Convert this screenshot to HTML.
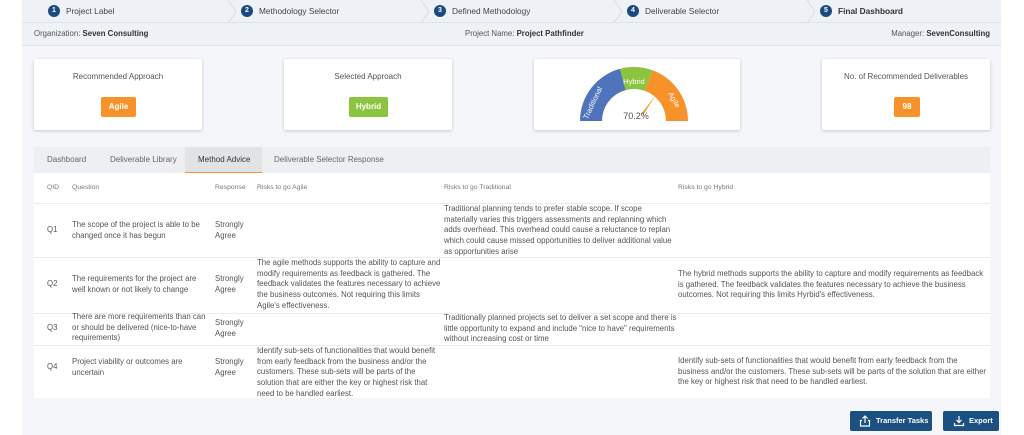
<!DOCTYPE html>
<html><head><style>
*{margin:0;padding:0;box-sizing:border-box}
body{width:1024px;height:435px;background:#fff;font-family:"Liberation Sans",sans-serif;color:#555;position:relative;overflow:hidden;font-size:8px}
.a{position:absolute}
.main{left:22px;top:0;width:979px;height:435px;background:#f4f6f9}
.step{top:0;height:23px;line-height:23px;font-size:8.3px;color:#444}
.num{display:inline-block;width:12px;height:12px;border-radius:50%;background:#1c4a7e;color:#fff;font-size:7px;font-weight:bold;text-align:center;line-height:12px;margin-right:6px;vertical-align:middle;position:relative;top:-1px}
.card{background:#fff;border-radius:2px;box-shadow:0 1px 3px rgba(0,0,0,.2);top:59px;height:71px}
.ct{position:absolute;top:13px;width:100%;text-align:center;font-size:8px;color:#555}
.badge{position:absolute;top:38px;height:20px;line-height:20px;color:#fff;font-weight:bold;font-size:8px;text-align:center;border-radius:2px}
.tab{top:147px;height:26px;line-height:26px;font-size:8px;color:#666}
.cell{line-height:10.7px;font-size:7.8px;color:#555;white-space:nowrap}
.hd{font-size:6.8px;color:#777;top:184px}
.hr{left:34px;width:956px;height:1px;background:#ececec}
.btn{top:411px;height:20px;background:#1c4f82;border-radius:2px;color:#fff;font-weight:bold;font-size:7.5px;line-height:20px}
</style></head><body>
<div class="a main"></div>
<div class="a" style="left:22px;top:0;width:979px;height:23px;background:#eef1f5;border-bottom:1px solid #dde2e8"></div>
<div class="a" style="left:22px;top:23px;width:979px;height:23px;background:#eef1f5;border-bottom:1px solid #dde2e8"></div>
<div class="a step" style="left:48px"><span class="num">1</span>Project Label</div>
<div class="a step" style="left:241px"><span class="num">2</span>Methodology Selector</div>
<div class="a step" style="left:434px"><span class="num">3</span>Defined Methodology</div>
<div class="a step" style="left:627px"><span class="num">4</span>Deliverable Selector</div>
<div class="a step" style="left:820px;font-weight:bold;color:#333"><span class="num">5</span>Final Dashboard</div>
<svg class="a" style="left:0;top:0" width="1024" height="23"><g fill="none" stroke="#d3d9e0" stroke-width="0.8"><path d="M228 0 L236 11.5 L228 23"/><path d="M421 0 L429 11.5 L421 23"/><path d="M614 0 L622 11.5 L614 23"/><path d="M807 0 L815 11.5 L807 23"/></g></svg>
<div class="a" style="left:34px;top:29px;font-size:7.8px;color:#555">Organization: <b style="color:#333">Seven Consulting</b></div>
<div class="a" style="left:465px;top:29px;font-size:7.8px;color:#555">Project Name: <b style="color:#333">Project Pathfinder</b></div>
<div class="a" style="right:34px;top:29px;font-size:7.8px;color:#555;white-space:nowrap">Manager: <b style="color:#333">SevenConsulting</b></div>

<div class="a card" style="left:34px;width:168px"><div class="ct">Recommended Approach</div><div class="badge" style="left:67px;width:35px;background:#f7922b">Agile</div></div>
<div class="a card" style="left:284px;width:168px"><div class="ct">Selected Approach</div><div class="badge" style="left:65px;width:39px;background:#8cc43f">Hybrid</div></div>
<div class="a card" style="left:534px;width:206px"></div>
<div class="a card" style="left:822px;width:168px"><div class="ct">No. of Recommended Deliverables</div><div class="badge" style="left:72px;width:26px;background:#f7922b">98</div></div>
<svg class="a" style="left:534px;top:59px" width="206" height="71">
<g transform="translate(100,62)">
<path d="M-54 0 A54 54 0 0 1 -14 -52.2 L-8.3 -30.9 A32 32 0 0 0 -32 0Z" fill="#4f74bb"/>
<path d="M-14 -52.2 A54 54 0 0 1 18.5 -50.7 L10.9 -30.1 A32 32 0 0 0 -8.3 -30.9Z" fill="#8cc43f"/>
<path d="M18.5 -50.7 A54 54 0 0 1 54 0 L32 0 A32 32 0 0 0 10.9 -30.1Z" fill="#f7922b"/>
<text x="0" y="-37" fill="#fff" font-size="7.5" text-anchor="middle">Hybrid</text>
<text transform="translate(-39,-17) rotate(-65)" fill="#fff" font-size="7.5" text-anchor="middle">Traditional</text>
<text transform="translate(38,-20) rotate(62)" fill="#fff" font-size="7.5" text-anchor="middle">Agile</text>
<path d="M22 -26 L9 -6 L7.5 -7.5Z" fill="#f7922b"/>
<text x="2" y="-2" fill="#555" font-size="9" text-anchor="middle">70.2%</text>
</g></svg>

<div class="a" style="left:34px;top:147px;width:956px;height:26px;background:#eeeff1"></div>
<div class="a" style="left:34px;top:173px;width:956px;height:225px;background:#fff"></div>
<div class="a tab" style="left:47px">Dashboard</div>
<div class="a tab" style="left:110px">Deliverable Library</div>
<div class="a" style="left:185px;top:147px;width:77px;height:26px;background:#e2e3e5;border-bottom:1px solid #f7922b"></div>
<div class="a tab" style="left:198px;color:#333">Method Advice</div>
<div class="a tab" style="left:274px">Deliverable Selector Response</div>

<div class="a hd" style="left:47px">QID</div>
<div class="a hd" style="left:72px">Question</div>
<div class="a hd" style="left:215px">Response</div>
<div class="a hd" style="left:257px">Risks to go Agile</div>
<div class="a hd" style="left:444px">Risks to go Traditional</div>
<div class="a hd" style="left:678px">Risks to go Hybrid</div>
<div class="a hr" style="top:203px"></div>
<div class="a hr" style="top:257px"></div>
<div class="a hr" style="top:313px"></div>
<div class="a hr" style="top:345px"></div>

<div class="a cell" style="left:47px;top:225px">Q1</div>
<div class="a cell" style="left:72px;top:220px">The scope of the project is able to be<br>changed once it has begun</div>
<div class="a cell" style="left:215px;top:220px">Strongly<br>Agree</div>
<div class="a cell" style="left:444px;top:204px">Traditional planning tends to prefer stable scope. If scope<br>materially varies this triggers assessments and replanning which<br>adds overhead. This overhead could cause a reluctance to replan<br>which could cause missed opportunities to deliver additional value<br>as opportunities arise</div>

<div class="a cell" style="left:47px;top:279px">Q2</div>
<div class="a cell" style="left:72px;top:274px">The requirements for the project are<br>well known or not likely to change</div>
<div class="a cell" style="left:215px;top:274px">Strongly<br>Agree</div>
<div class="a cell" style="left:257px;top:258px">The agile methods supports the ability to capture and<br>modify requirements as feedback is gathered. The<br>feedback validates the features necessary to achieve<br>the business outcomes. Not requiring this limits<br>Agile's effectiveness.</div>
<div class="a cell" style="left:678px;top:269px">The hybrid methods supports the ability to capture and modify requirements as feedback<br>is gathered. The feedback validates the features necessary to achieve the business<br>outcomes. Not requiring this limits Hyrbid's effectiveness.</div>

<div class="a cell" style="left:47px;top:323px">Q3</div>
<div class="a cell" style="left:72px;top:312px">There are more requirements than can<br>or should be delivered (nice-to-have<br>requirements)</div>
<div class="a cell" style="left:215px;top:318px">Strongly<br>Agree</div>
<div class="a cell" style="left:444px;top:313px">Traditionally planned projects set to deliver a set scope and there is<br>little opportunity to expand and include "nice to have" requirements<br>without increasing cost or time</div>

<div class="a cell" style="left:47px;top:362px">Q4</div>
<div class="a cell" style="left:72px;top:357px">Project viability or outcomes are<br>uncertain</div>
<div class="a cell" style="left:215px;top:357px">Strongly<br>Agree</div>
<div class="a cell" style="left:257px;top:346px">Identify sub-sets of functionalities that would benefit<br>from early feedback from the business and/or the<br>customers. These sub-sets will be parts of the<br>solution that are either the key or highest risk that<br>need to be handled earliest.</div>
<div class="a cell" style="left:678px;top:356px">Identify sub-sets of functionalities that would benefit from early feedback from the<br>business and/or the customers. These sub-sets will be parts of the solution that are either<br>the key or highest risk that need to be handled earliest.</div>

<div class="a btn" style="left:850px;width:82px"><svg class="a" style="left:9px;top:4px" width="12" height="12" fill="none" stroke="#fff" stroke-width="1.2"><path d="M6 1v7M3.5 3.5L6 1l2.5 2.5M3 5.5H1.5v5.5h9V5.5H9"/></svg><span style="position:absolute;left:26px">Transfer Tasks</span></div>
<div class="a btn" style="left:943px;width:56px"><svg class="a" style="left:10px;top:4px" width="12" height="12" fill="none" stroke="#fff" stroke-width="1.2"><path d="M6 1v6.5M3.5 5L6 7.5 8.5 5M1.5 8v2.5h9V8"/></svg><span style="position:absolute;left:26px">Export</span></div>
</body></html>
